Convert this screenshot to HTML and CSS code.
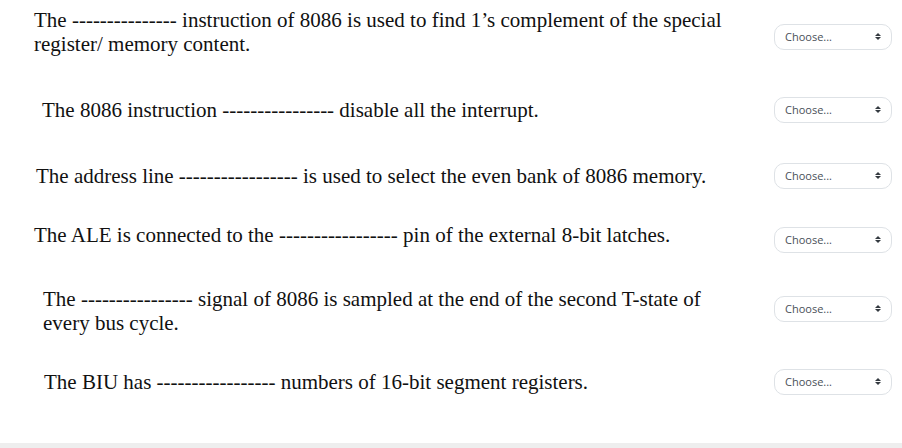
FILE: index.html
```html
<!DOCTYPE html>
<html lang="en">
<head>
    <meta charset="UTF-8">
    <meta name="viewport" content="width=device-width, initial-scale=1.0">
    <title>Quiz - 8086 Microprocessor</title>
    <link rel="stylesheet" href="styles.css">
</head>
<body>
    <div class="question-card">
        <div class="match-list">
            <div class="match-row row-1">
                <div class="prompt prompt-1">The --------------- instruction of 8086 is used to find 1’s complement of the special register/ memory content.</div>
                <div class="control"><div class="choose">Choose...<span class="caret"></span></div></div>
            </div>
            <div class="match-row row-2">
                <div class="prompt prompt-2">The 8086 instruction ---------------- disable all the interrupt.</div>
                <div class="control"><div class="choose">Choose...<span class="caret"></span></div></div>
            </div>
            <div class="match-row row-3">
                <div class="prompt prompt-3">The address line ----------------- is used to select the even bank of 8086 memory.</div>
                <div class="control"><div class="choose">Choose...<span class="caret"></span></div></div>
            </div>
            <div class="match-row row-4">
                <div class="prompt prompt-4">The ALE is connected to the ----------------- pin of the external 8-bit latches.</div>
                <div class="control"><div class="choose">Choose...<span class="caret"></span></div></div>
            </div>
            <div class="match-row row-5">
                <div class="prompt prompt-5">The ---------------- signal of 8086 is sampled at the end of the second T-state of every bus cycle.</div>
                <div class="control"><div class="choose">Choose...<span class="caret"></span></div></div>
            </div>
            <div class="match-row row-6">
                <div class="prompt prompt-6">The BIU has ----------------- numbers of 16-bit segment registers.</div>
                <div class="control"><div class="choose">Choose...<span class="caret"></span></div></div>
            </div>
        </div>
    </div>
</body>
</html>
```

FILE: styles.css
```css
* {
    margin: 0;
    padding: 0;
    box-sizing: border-box;
}

body {
    background-color: #eeeeee;
    font-family: "Open Sans", Arial, sans-serif;
    color: #1d2125;
}

.question-card {
    background-color: #fff;
    height: 443px;
    box-shadow: 0 1px 2px rgba(0, 0, 0, 0.15);
}

.match-list {
    display: flex;
    flex-direction: column;
}

.match-row {
    display: flex;
    align-items: center;
    justify-content: space-between;
    padding-right: 10px;
}

.row-1 { height: 74px; }
.row-2 { height: 72px; }
.row-3 { height: 60px; }
.row-4 { height: 68px; }
.row-5 { height: 70px; }
.row-6 { height: 76px; }

.prompt {
    font-family: "Liberation Serif", "Times New Roman", serif;
    font-size: 21px;
    line-height: 24px;
    color: #111;
}

.prompt-1 { padding-left: 34px; width: 732px; margin-top: -10px; }
.prompt-2 { padding-left: 42px; }
.prompt-3 { padding-left: 36px; }
.prompt-4 { padding-left: 34px; margin-top: -10px; }
.prompt-5 { padding-left: 43px; width: 720px; margin-top: 4px; }
.prompt-6 { padding-left: 44px; }

.choose {
    position: relative;
    width: 118px;
    height: 26px;
    border: 1px solid #dee2e6;
    border-radius: 10px;
    padding-left: 10px;
    font-size: 11px;
    line-height: 24px;
    color: #495057;
}

/* up/down arrows of the select box */
.caret {
    position: absolute;
    right: 10px;
    top: 8px;
    width: 0;
    height: 0;
    border-left: 3px solid transparent;
    border-right: 3px solid transparent;
    border-bottom: 3px solid #343a40;
}

.caret::after {
    content: '';
    position: absolute;
    left: -3px;
    top: 4px;
    border-left: 3px solid transparent;
    border-right: 3px solid transparent;
    border-top: 3px solid #343a40;
}
```
